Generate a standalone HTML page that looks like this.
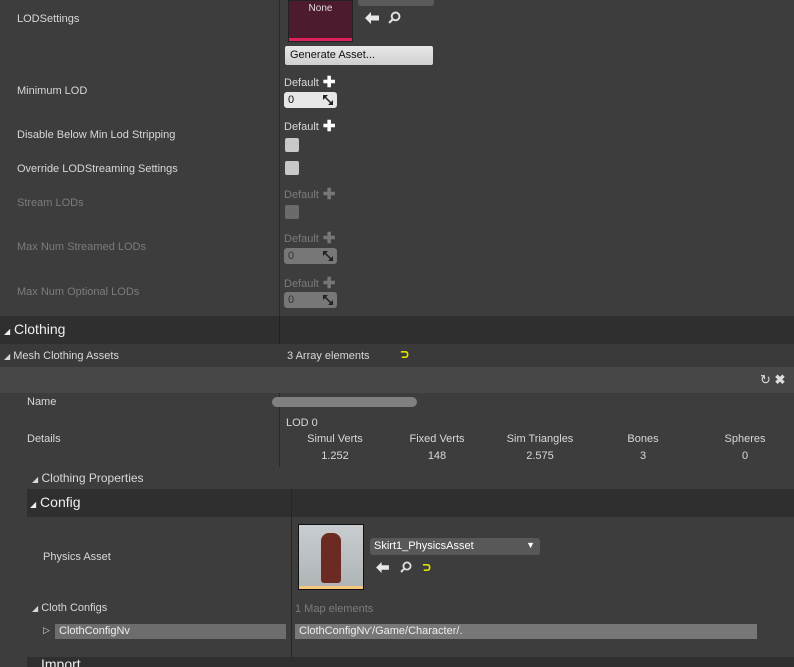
<!DOCTYPE html>
<html><head><style>
*{margin:0;padding:0;box-sizing:border-box}
body{width:794px;height:667px;background:#3d3d3d;font-family:"Liberation Sans",sans-serif;font-size:11px;color:#d8d8d8;position:relative;overflow:hidden}
.a{position:absolute}
.lbl{position:absolute;left:17px}
.dim{color:#7c7c7c}
.chk{position:absolute;width:14px;height:14px;background:#c8c8c8;border-radius:2px}
.num{position:absolute;width:53px;height:16px;background:#e6e6e6;border-radius:3px;color:#111;padding:2px 4px;font-size:11px}
.num.d{background:#777;color:#333}
.num svg{position:absolute;right:4px;top:3px}
.plus{display:inline-block;font-weight:bold;font-size:15px;color:#fff;margin-left:4px;vertical-align:-1px}
.vd{position:absolute;width:1px;background:#2a2a2a}
</style></head><body>
<svg width="0" height="0" style="position:absolute"><defs>
<symbol id="arr" viewBox="0 0 14 12"><path d="M0 6 L6 0 L6 3.5 L14 3.5 L14 8.5 L6 8.5 L6 12 Z" fill="#e8e8e8"/></symbol>
<symbol id="mag" viewBox="0 0 12 12"><circle cx="7" cy="5" r="3.6" fill="none" stroke="#e0e0e0" stroke-width="1.8"/><path d="M4.3 7.7 L1 11" stroke="#e0e0e0" stroke-width="2"/></symbol>
<symbol id="rs" viewBox="0 0 10 10"><path d="M1 2 H6 Q8.5 2 8.5 5 Q8.5 8 6 8 H2" fill="none" stroke="#e0e000" stroke-width="1.8"/></symbol>
<symbol id="ud" viewBox="0 0 10 10"><path d="M0 0 H5 L0 5Z M10 10 H5 L10 5Z" fill="#222"/><path d="M2 2 L8 8" stroke="#222" stroke-width="1.5"/></symbol>
</defs></svg>
<div class="vd" style="left:279px;top:0;height:344px"></div>
<div class="lbl" style="top:13px">LODSettings</div>
<div class="a" style="left:288px;top:0;width:65px;height:42px;background:#4c1c2e;border:1px solid #222;"><div style="text-align:center;font-size:10px;color:#ddd;margin-top:2px">None</div><div class="a" style="left:0;bottom:0;width:63px;height:3px;background:#e0205a"></div></div>
<div class="a" style="left:358px;top:0;width:76px;height:6px;background:#5a5a5a;border-radius:0 0 3px 3px"></div>
<svg class="a" style="left:365px;top:12px" width="14" height="12"><use href="#arr"/></svg>
<svg class="a" style="left:388px;top:11px" width="13" height="13"><use href="#mag"/></svg>
<div class="a" style="left:285px;top:46px;width:148px;height:19px;background:linear-gradient(#e8e8e8,#cfcfcf);border-radius:2px;color:#111;padding:3px 5px">Generate Asset...</div>
<div class="lbl" style="top:85px">Minimum LOD</div>
<div class="a" style="left:284px;top:73px">Default<span class="plus">✚</span></div>
<div class="num" style="left:284px;top:92px">0<svg width="10" height="10"><use href="#ud"/></svg></div>
<div class="lbl" style="top:129px">Disable Below Min Lod Stripping</div>
<div class="a" style="left:284px;top:117px">Default<span class="plus">✚</span></div>
<div class="chk" style="left:285px;top:138px"></div>
<div class="lbl" style="top:163px">Override LODStreaming Settings</div>
<div class="chk" style="left:285px;top:161px"></div>
<div class="lbl dim" style="top:197px">Stream LODs</div>
<div class="a dim" style="left:284px;top:185px">Default<span class="plus" style="color:#777">✚</span></div>
<div class="chk" style="left:285px;top:205px;background:#6a6a6a"></div>
<div class="lbl dim" style="top:241px">Max Num Streamed LODs</div>
<div class="a dim" style="left:284px;top:229px">Default<span class="plus" style="color:#777">✚</span></div>
<div class="num d" style="left:284px;top:248px">0<svg width="10" height="10"><use href="#ud"/></svg></div>
<div class="lbl dim" style="top:286px">Max Num Optional LODs</div>
<div class="a dim" style="left:284px;top:274px">Default<span class="plus" style="color:#777">✚</span></div>
<div class="num d" style="left:284px;top:292px">0<svg width="10" height="10"><use href="#ud"/></svg></div>

<div class="a" style="left:0;top:316px;width:794px;height:28px;background:#2f2f2f"></div>
<div class="vd" style="left:279px;top:316px;height:51px;background:#222"></div>
<div class="a" style="left:4px;top:321px;font-size:14px;color:#eee"><span style="font-size:8px">◢</span> Clothing</div>
<div class="a" style="left:0;top:344px;width:794px;height:23px;background:#3a3a3a"></div>
<div class="a" style="left:4px;top:350px"><span style="font-size:8px">◢</span> Mesh Clothing Assets</div>
<div class="a" style="left:287px;top:350px">3 Array elements</div>
<svg class="a" style="left:400px;top:350px" width="9" height="9"><use href="#rs"/></svg>
<div class="a" style="left:0;top:367px;width:794px;height:26px;background:#474747"></div>
<div class="a" style="left:760px;top:372px;color:#ddd;font-size:13px">↻ <b>✖</b></div>
<div class="vd" style="left:279px;top:393px;height:74px"></div>
<div class="a" style="left:27px;top:396px">Name</div>
<div class="a" style="left:272px;top:397px;width:145px;height:10px;background:#808080;border-radius:5px"></div>
<div class="a" style="left:286px;top:417px">LOD 0</div>
<div class="a" style="left:27px;top:433px">Details</div>
<div class="a" style="left:295px;top:433px;width:80px;text-align:center;white-space:nowrap">Simul Verts<br><span style="line-height:22px">1.252</span></div>
<div class="a" style="left:397px;top:433px;width:80px;text-align:center">Fixed Verts<br><span style="line-height:22px">148</span></div>
<div class="a" style="left:495px;top:433px;width:90px;text-align:center">Sim Triangles<br><span style="line-height:22px">2.575</span></div>
<div class="a" style="left:613px;top:433px;width:60px;text-align:center">Bones<br><span style="line-height:22px">3</span></div>
<div class="a" style="left:715px;top:433px;width:60px;text-align:center">Spheres<br><span style="line-height:22px">0</span></div>
<div class="a" style="left:32px;top:471px;font-size:12px"><span style="font-size:8px">◢</span> Clothing Properties</div>
<div class="a" style="left:27px;top:489px;width:767px;height:28px;background:#2f2f2f"></div>
<div class="vd" style="left:291px;top:489px;height:168px;background:#262626"></div>
<div class="a" style="left:30px;top:494px;font-size:14px;color:#eee"><span style="font-size:8px">◢</span> Config</div>
<div class="a" style="left:43px;top:551px">Physics Asset</div>
<div class="a" style="left:298px;top:524px;width:66px;height:66px;background:linear-gradient(#c9cdd0,#aeb3b6);border:1px solid #111"><div class="a" style="left:22px;top:8px;width:20px;height:50px;background:#6b2a22;border-radius:8px 8px 3px 3px"></div><div class="a" style="left:0;bottom:0;width:64px;height:3px;background:#f5c77a"></div></div>
<div class="a" style="left:370px;top:538px;width:170px;height:17px;background:#585858;border-radius:3px;padding:2px 4px;color:#fff">Skirt1_PhysicsAsset<span style="position:absolute;right:5px;top:2px;font-size:9px">▼</span></div>
<svg class="a" style="left:376px;top:562px" width="13" height="11"><use href="#arr"/></svg>
<svg class="a" style="left:400px;top:561px" width="12" height="12"><use href="#mag"/></svg>
<svg class="a" style="left:422px;top:563px" width="9" height="9"><use href="#rs"/></svg>
<div class="a" style="left:32px;top:602px"><span style="font-size:8px">◢</span> Cloth Configs</div>
<div class="a dim" style="left:295px;top:603px">1 Map elements</div>
<div class="a" style="left:43px;top:625px;font-size:9px">▷</div>
<div class="a" style="left:55px;top:624px;width:231px;height:15px;background:#6d6d6d;padding:1px 4px;color:#eee">ClothConfigNv</div>
<div class="a" style="left:295px;top:624px;width:462px;height:15px;background:#777;padding:1px 4px;color:#eee">ClothConfigNv'/Game/Character/.</div>
<div class="a" style="left:27px;top:657px;width:767px;height:10px;background:#2f2f2f;font-size:14px;padding-left:14px;color:#eee;line-height:14px;overflow:hidden">Import</div>
</body></html>
